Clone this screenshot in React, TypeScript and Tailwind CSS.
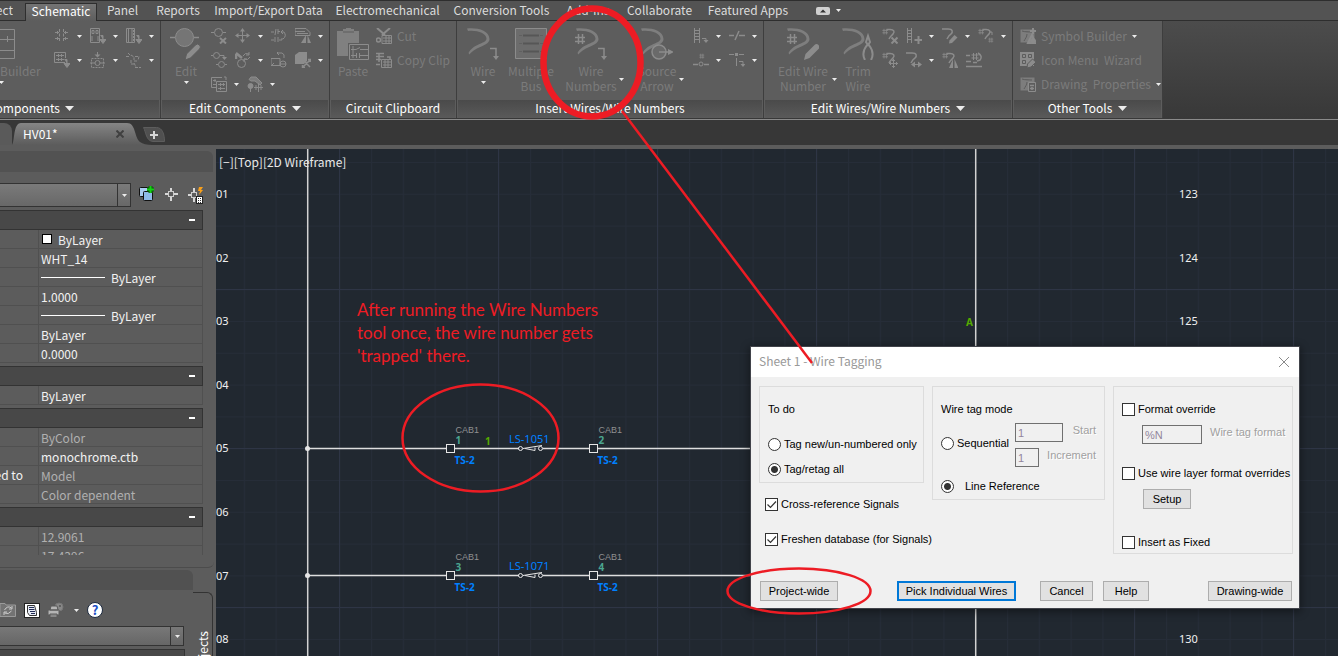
import React from "react";

type IconProps = { children: React.ReactNode; size?: number };

// 16px grid for small icons, 32px for the large ribbon buttons
const Icon = ({ children, size = 16 }: IconProps) => (
  <svg
    width={size}
    height={size}
    viewBox={`0 0 ${size} ${size}`}
    fill="none"
    stroke="currentColor"
    strokeWidth="1"
    className="shrink-0 text-[#8c8c8c]"
    aria-hidden="true"
  >
    {children}
  </svg>
);

const Caret = ({ big = false }: { big?: boolean }) => (
  <svg
    width={big ? 9 : 5}
    height={big ? 5 : 3}
    viewBox="0 0 8 4"
    preserveAspectRatio="none"
    className="shrink-0 fill-[#ececec]"
    aria-hidden="true"
  >
    <path d="M0 0h8L4 4z" />
  </svg>
);

const arrowDown = <path d="M10.5 7.5h2.5v4M10 11.5h6l-3 4z" fill="currentColor" />;
const hash = <path d="M2.5 1v7M5.5 1v7M.5 3h7M.5 6h7" />;
const smallWire = <path d="M5 1.5h3c4 0 5 2 3 4.5-1 1.5-3 2.500-4 5" strokeWidth="1.500" />;
const wire = (
  <path
    d="M0 0.500C10-.5 22 2 22.500 11 22.500 18 9 18 2.500 26.500L1.500 25C7 15 19.500 16 19.500 10.500 19 5 10 2 1 3z"
    fill="#7e7e7e"
    stroke="none"
  />
);
const bigHash = <path d="M3.500 6v10M7.500 6v10M0 9.500h10M0 13.500h10" strokeWidth="1.500" />;
const pencil = (
  <path d="M17 32l1.500-6 9-9q2-2 4 0t0 4l-9 9z" fill="currentColor" stroke="none" />
);
const smallPencil = <path d="M7 15.500l.5-3 5-5.500 3 2.500-5.500 5.500z" fill="currentColor" stroke="none" />;
const symbolPage = (
  <path d="M0 1h15v14H0z M2 3c3 1 7 1 10 1 M7 6c0 3-2 5-3 7" fill="currentColor" fillOpacity=".7" stroke="#5d5d5d" />
);

const icons = {
  component: (
    <>
      <path d="M5.500 1v13M9.500 1v13" strokeDasharray="3 1.500" />
      <path d="M1 4.500h4M10 4.500h4M1 10.500h4M10 10.500h4M3.500 3v3M11.500 3v3M3.500 9v3M11.500 9v3" />
    </>
  ),
  cabinet: (
    <>
      <path d="M.5.500h9v14h-9zM2 2.500h2v3H2zM6 2.500h2v3H6zM2 8v5M8 8v5" />
      {arrowDown}
    </>
  ),
  terminals: (
    <>
      <path d="M.500.500h8v14h-8zM2.500.500v14M6 1v13" />
      <path d="M7.500 2v11" strokeDasharray="2 1" />
      {arrowDown}
    </>
  ),
  plc: (
    <>
      <path d="M11 10.500H.500V.500h11V6M2 3.500h8M2 7.500h8M4.500 2v3M7.500 2v3M4.500 6v3M7.500 6v3" />
      {arrowDown}
    </>
  ),
  snap: (
    <>
      <path d="M1.500 6.500h12v9h-12z" strokeDasharray="2 1" />
      <circle cx="7.500" cy="11" r="2.500" />
      <path d="M0 11h5M10 11h5M7.500 0v3" />
      <path d="M4.500 2.500h6l-3 3z" fill="currentColor" stroke="none" />
    </>
  ),
  circuit: (
    <path d="M0 4.500h4M5 3l3 2v3M9 4.500h4l-1 4M2 1l3 3M5 8v4h3M8 9h4M9 15.500h6M8 11l2 4" strokeDasharray="3 1" />
  ),
  erase: (
    <>
      <circle cx="7.500" cy="4.500" r="4" />
      <path d="M0 4.500h3M12 4.500h3" />
      <path d="M9 10l6 5.500M15 10l-6 5.500" strokeWidth="2" />
    </>
  ),
  move: (
    <>
      <path d="M7.500 2v11M2 7.500h11" />
      <path d="M5 3.500L7.500 0 10 3.500zM5 11.500L7.500 15l2.500-3.500zM3.500 5L0 7.500 3.500 10zM11.500 5L15 7.500 11.500 10z" fill="currentColor" stroke="none" />
    </>
  ),
  align: (
    <path d="M0 4h3M5 1l-1 6M7 1v5M7 3.500h2M0 12h3M4 9v5M7 9v5M8 12h3M10 4h3q3 4-1 7h-2M12 2l-2 2 2 2" />
  ),
  surfer: (
    <>
      <path d="M0 .500h11l4 4v3H0zM0 3.500h10M2 5.500h11" />
      <path d="M11 7v8H6zM12.500 7v8H16z" fill="currentColor" stroke="none" />
    </>
  ),
  copyPart: (
    <>
      <circle cx="5.500" cy="3.500" r="3" />
      <circle cx="10.500" cy="12.500" r="3" />
      <path d="M0 3.500h2M9 3.500h4v3M5 12.500h2M14 12.500h2" />
      <path d="M11 5h5l-2.500 3z" fill="currentColor" stroke="none" />
    </>
  ),
  swap: (
    <>
      <circle cx="6.500" cy="11.500" r="4" />
      <path d="M1 2v5M1 1l6 5" strokeWidth="2.500" />
      <path d="M8 4q2-4 6-2M14 0v3h-3M15 5q-2 4-6 2M9 10V7h3" />
    </>
  ),
  retag: (
    <>
      <path d="M0 6.500h9v7H0zM7 1h4q3 1 2 5M8 3l-2-2 2-2M0 14l3-3" />
      <circle cx="12" cy="12" r="3" />
      <path d="M9 12h6" />
    </>
  ),
  block: (
    <>
      <path d="M0 3l4-3h8v9l-3 3H0z" fill="currentColor" stroke="none" />
      <path d="M8 8l7 7M15 8l-7 7M13 7.500h2.500V10M7.500 13v2.500H10" strokeWidth="1.500" />
    </>
  ),
  copyCircuit: (
    <>
      <path d="M6 11.500H.500V1.500H11M2 4.500h3M2 8.500h3M4 3v3M13 1h2v3" />
      <path d="M5.500 5.500h10v10h-10zM7 8.500h7M7 12.500h7M9.500 7v3M12.500 7v3M9.500 11v3" />
    </>
  ),
  moveGroup: (
    <>
      <path d="M2 3.500L4 1h5l6 6-2 2-5-4H4z" fill="#7c7c7c" />
      <circle cx="3.500" cy="10" r="2.500" fill="currentColor" />
      <path d="M11.500 7v9M7 11.500h9M9 9v5M14 9v5M3.500 12v4" />
    </>
  ),
  cut: (
    <>
      <path d="M1 0l8 7M14 0L6 7" strokeWidth="2" />
      <circle cx="2.500" cy="12" r="2" strokeWidth="1.500" />
      <path d="M6 7.500h9.500v8H6zM7 10h8M7 13h8M10 8v7M13 8v7" />
    </>
  ),
  copyClip: (
    <>
      <path d="M0 1.500h8M0 4.500h8M0 7.500h5M3 2v8M11 5h3v3M0 12.500h4" strokeWidth="1.500" />
      <path d="M5.500 7.500h10v8h-10zM7 10h8M7 13h8M9 8v7M12 8v7" />
    </>
  ),
  ladder: (
    <>
      <path d="M1.500 0v15M6.500 0v15M1.500 2.500h5M1.500 5.500h5M1.500 8.500h5M1.500 11.500h5M9 10.500h4v3" />
      <path d="M10.500 12h5L13 15z" fill="currentColor" stroke="none" />
    </>
  ),
  ladderAdd: (
    <>
      <path d="M1.500 0v15M5.500 0v15M1.500 2.500h4M1.500 5.500h4M1.500 8.500h4M1.500 11.500h4" />
      <path d="M12.500 8v8M8.500 12h8" strokeWidth="2" />
    </>
  ),
  gap: <path d="M0 7.500h5M10 7.500h6M6 12l4-9" strokeWidth="1.500" />,
  wireDot: (
    <>
      <g transform="translate(6 1) scale(.7)">{hash}</g>
      <circle cx="8" cy="12" r="2" />
      <path d="M0 12.500h5M11 12.500h5" strokeWidth="1.500" />
    </>
  ),
  tee: (
    <>
      <path d="M0 2.500h5M10 2.500h5M7.500 6v8M10 9.500h4v3" />
      <path d="M6 1h3v3H6zM11.500 12h5L14 15z" fill="currentColor" stroke="none" />
    </>
  ),
  wireDelete: (
    <>
      {smallWire}
      <g transform="scale(.8)">{hash}</g>
      <path d="M9.500 9.500l6 6M15.500 9.500l-6 6" strokeWidth="2" />
    </>
  ),
  wirePencil: (
    <>
      <path d="M0 1h6c5 0 5 3 3 5-2 1-3 3-4 5" strokeWidth="1.500" />
      {smallPencil}
    </>
  ),
  wireCopy: (
    <>
      {smallWire}
      <g transform="scale(.8)">{hash}</g>
      <g transform="translate(10 9) scale(.7)">{hash}</g>
      <path d="M12 4h2v3" />
    </>
  ),
  wireMove: (
    <>
      {smallWire}
      <g transform="scale(.8)">{hash}</g>
      <path d="M11.500 7v9M7 11.500h9M10 8.500h3M10 14.500h3M8.500 10v3M14.500 10v3" />
    </>
  ),
  wireStretch: (
    <>
      <path d="M0 1h6c5 0 5 3 3 5-2 1-3 3-4 5" strokeWidth="1.500" />
      <path d="M5 12.500l4-3v6zM16 12.500l-4-3v6z" fill="currentColor" stroke="none" />
      <path d="M8 12.500h5" />
    </>
  ),
  wireFlip: (
    <>
      {smallWire}
      <g transform="scale(.8)">{hash}</g>
      <path d="M11 7v9H7zM12.500 7v9h4z" fill="currentColor" stroke="none" />
    </>
  ),
  wireToggle: (
    <>
      <g transform="translate(5 0)">{hash}</g>
      <path d="M0 3.500h4M0 9.500h5M7 10.500h4M12 1q5 3 2 7l-3 1M0 14.500h16" strokeWidth="1.500" />
    </>
  ),
  symbolBuilder: (
    <>
      {symbolPage}
      <path d="M8 15l4-8 3 8zM13 0v6M10 3h6" strokeWidth="2" />
      <circle cx="13" cy="13" r="2.500" fill="#8c8c8c" />
    </>
  ),
  iconMenu: (
    <>
      <path d="M0 0h14v14H0z" fill="currentColor" stroke="none" />
      <path d="M2.500 2.500h3v3h-3zM8.500 2.500h3v3h-3zM2.500 8.500h3v3h-3z" stroke="#5d5d5d" />
      <path d="M7 16l.5-4 5-5 3.500 3-5 5z" fill="currentColor" stroke="#5d5d5d" />
    </>
  ),
  drawingProps: (
    <>
      {symbolPage}
      <path d="M8.500 6.500h7v9h-7z" fill="#5d5d5d" />
      <path d="M10 9.500h4M10 12.500h4M12 11v3" strokeWidth="1.500" />
    </>
  ),
};

type IconName = keyof typeof icons;
type Tool = { icon: IconName; menu?: boolean };

const ToolGrid = ({ rows }: { rows: Tool[][] }) => (
  <div className="flex flex-col gap-2">
    {rows.map((row, i) => (
      <div key={i} className="flex">
        {row.map((tool) => (
          <button
            key={tool.icon}
            type="button"
            aria-label={tool.icon}
            className={`flex h-4 items-center gap-[7px] ${tool.menu ? "w-9" : "w-6"}`}
          >
            <Icon>{icons[tool.icon]}</Icon>
            {tool.menu && <Caret />}
          </button>
        ))}
      </div>
    ))}
  </div>
);

type BigToolProps = {
  lines: string[];
  width: string;
  caret?: "below" | "side";
  children: React.ReactNode;
};

const BigTool = ({ lines, width, caret, children }: BigToolProps) => (
  <div className="flex">
    <button type="button" className={`flex shrink-0 flex-col items-center ${width}`}>
      <Icon size={32}>{children}</Icon>
      <span className="mt-[3px] flex flex-col items-center leading-[15px] whitespace-nowrap text-[#7b7b7b]">
        {lines.map((line) => (
          <span key={line}>{line}</span>
        ))}
      </span>
      {caret === "below" && (
        <span className="mt-[3px]">
          <Caret />
        </span>
      )}
    </button>
    {caret === "side" && (
      <span className="flex w-2 justify-center pt-[50px]">
        <Caret />
      </span>
    )}
  </div>
);

type PanelProps = {
  title: string;
  width: string;
  menu?: boolean;
  children: React.ReactNode;
};

const Panel = ({ title, width, menu, children }: PanelProps) => (
  <section
    className={`flex shrink-0 flex-col border-r border-[#3e3e3e] bg-[#5d5d5d] ${width}`}
  >
    <div className="flex flex-1 overflow-hidden pt-[7px]">{children}</div>
    <h2 className="mx-px flex h-[18px] items-center justify-center gap-1.5 overflow-hidden bg-linear-to-b from-[#4a4a4a] to-[#5a5a5a] pb-0.5 whitespace-nowrap text-white">
      {title}
      {menu && <Caret big />}
    </h2>
  </section>
);

const tabs = [
  { label: "Panel", width: "w-[51px]" },
  { label: "Reports", width: "w-[60px]" },
  { label: "Import/Export Data", width: "w-[121px]" },
  { label: "Electromechanical", width: "w-[117px]" },
  { label: "Conversion Tools", width: "w-[111px]" },
  { label: "Add-Ins", width: "w-[62px]" },
  { label: "Collaborate", width: "w-[81px]" },
  { label: "Featured Apps", width: "w-[96px]" },
];

const RibbonTabs = () => (
  <nav className="flex h-[21px] shrink-0 border-t border-b border-[#2e2e2e] bg-[#535353] text-[#dcdcdc]">
    <button type="button" className="flex w-[13px] items-center justify-end overflow-hidden pb-0.5">
      Project
    </button>
    <button
      type="button"
      className="mt-0.5 -mb-px ml-3 w-[72px] border border-b-0 border-[#2e2e2e] bg-linear-to-b from-[#747474] to-[#5d5d5d] pb-1 leading-[13px] text-white"
    >
      Schematic
    </button>
    {tabs.map((tab) => (
      <button key={tab.label} type="button" className={`pb-0.5 whitespace-nowrap ${tab.width}`}>
        {tab.label}
      </button>
    ))}
    <button type="button" aria-label="Minimize" className="ml-5 flex items-center gap-1.5">
      <svg width="14" height="8" viewBox="0 0 14 8" aria-hidden="true">
        <rect width="14" height="8" rx="2" fill="#d0d0d0" />
        <path d="M4 5.500h6L7 2.500z" fill="#333" />
      </svg>
      <Caret />
    </button>
  </nav>
);

const otherTools: { icon: IconName; label: string; menu?: boolean }[] = [
  { icon: "symbolBuilder", label: "Symbol Builder", menu: true },
  { icon: "iconMenu", label: "Icon Menu  Wizard" },
  { icon: "drawingProps", label: "Drawing  Properties", menu: true },
];

const Ribbon = () => (
  <div className="flex h-[99px] shrink-0 border-b border-[#8a8a8a] bg-linear-to-b from-[#4c4c4c] to-[#383838] pb-px">
    {/* first panel is scrolled under the left edge */}
    <section className="flex w-[161px] shrink-0 flex-col border-r border-[#3e3e3e] bg-[#5d5d5d]">
      <div className="flex flex-1 overflow-hidden pt-[7px]">
        <div className="flex w-[54px] shrink-0 flex-col">
          <Icon size={32}>
            <path d="M0 1.500h14.500v29H0M0 22.500h14M0 11.500h14M7.500 8v6" />
          </Icon>
          <span className="mt-[3px] w-[39px] text-right leading-[15px] text-[#7b7b7b]">Builder</span>
          <span className="-ml-px mt-[3px]">
            <Caret />
          </span>
        </div>
        <ToolGrid
          rows={[
            [{ icon: "component", menu: true }, { icon: "cabinet", menu: true }, { icon: "terminals", menu: true }],
            [{ icon: "plc", menu: true }, { icon: "snap", menu: true }, { icon: "circuit", menu: true }],
          ]}
        />
      </div>
      <h2 className="mr-px flex h-[18px] items-center bg-linear-to-b from-[#4a4a4a] to-[#5a5a5a] pb-0.5 text-white">
        <span className="mr-[5px] flex w-[60px] justify-end overflow-hidden">Components</span>
        <Caret big />
      </h2>
    </section>

    <Panel title="Edit Components" width="w-[169px]" menu>
      <BigTool lines={["Edit"]} width="w-[50px]" caret="below">
        <circle cx="14.500" cy="9.500" r="9" fill="#757575" />
        <path d="M0 9.500h5M24 9.500h5" strokeWidth="1.500" />
        <path d="M15 32l1.500-6 9-9q2-2 4 0t0 4l-9 9z" fill="currentColor" stroke="#5d5d5d" />
      </BigTool>
      <ToolGrid
        rows={[
          [{ icon: "erase" }, { icon: "move", menu: true }, { icon: "align" }, { icon: "surfer", menu: true }],
          [{ icon: "copyPart" }, { icon: "swap", menu: true }, { icon: "retag" }, { icon: "block", menu: true }],
          [{ icon: "copyCircuit", menu: true }, { icon: "moveGroup", menu: true }],
        ]}
      />
    </Panel>

    <Panel title="Circuit Clipboard" width="w-[127px]">
      <BigTool lines={["Paste"]} width="w-[46px]">
        <path d="M0 3h6V1h3V0h5v1h3v2h5v12H11v13H0z" fill="#808080" stroke="none" />
        <path d="M6 4h11" stroke="#5d5d5d" />
        <path d="M12.500 16.500h19v15h-19zM14 21.500h5l4-2M23 21.500h8M14 27.500h5M22 27.500h9M19.500 25v5M22.500 25v5M16 18v12" />
      </BigTool>
      <div className="flex flex-col gap-2 text-[#7b7b7b]">
        <button type="button" className="flex h-4 items-center gap-[5px]">
          <Icon>{icons.cut}</Icon>Cut
        </button>
        <button type="button" className="flex h-4 items-center gap-[5px] whitespace-nowrap">
          <Icon>{icons.copyClip}</Icon>Copy Clip
        </button>
      </div>
    </Panel>

    <Panel title="Insert Wires/Wire Numbers" width="w-[307px]">
      <div className="flex pl-1">
        <BigTool lines={["Wire"]} width="w-[44px]" caret="below">
          {wire}
          <path d="M23 20.500h6v8" strokeWidth="1.500" />
          <path d="M26 28h6l-3 4z" fill="currentColor" stroke="none" />
        </BigTool>
        <BigTool lines={["Multiple", "Bus"]} width="w-[52px]">
          <path d="M.500.500h31v30H.500z" fill="#6c6c6c" />
          <path d="M8 7.500h16M8 15.500h16M8 23.500h16" stroke="#565656" strokeWidth="2" />
          <path d="M4 7.500h3M25 7.500h3M4 15.500h3M25 15.500h3M4 23.500h3M25 23.500h3" stroke="#606060" />
        </BigTool>
        <div className="flex gap-3 pl-2">
          <BigTool lines={["Wire", "Numbers"]} width="w-[52px]" caret="side">
            <g transform="translate(1 0)">{wire}</g>
            {bigHash}
            <path d="M23 20.500h6v8" strokeWidth="1.500" />
            <path d="M26 28h6l-3 4z" fill="currentColor" stroke="none" />
          </BigTool>
          <BigTool lines={["Source", "Arrow"]} width="w-10" caret="side">
            {wire}
            <circle cx="18" cy="24" r="7" fill="#6a6a6a" strokeWidth="1.500" />
            <path d="M18 24h9" strokeWidth="1.500" />
            <path d="M27 21l6 3-6 3z" fill="currentColor" stroke="none" />
          </BigTool>
        </div>
      </div>
      <div className="pl-2">
        <ToolGrid
          rows={[
            [{ icon: "ladder", menu: true }, { icon: "gap", menu: true }],
            [{ icon: "wireDot", menu: true }, { icon: "tee", menu: true }],
          ]}
        />
      </div>
    </Panel>

    <Panel title="Edit Wires/Wire Numbers" width="w-[249px]" menu>
      <div className="flex gap-1 pl-3">
        <BigTool lines={["Edit Wire", "Number"]} width="w-[54px]" caret="side">
          {wire}
          {bigHash}
          {pencil}
        </BigTool>
        <BigTool lines={["Trim", "Wire"]} width="w-[32px]">
          {wire}
          <path d="M24 14l2-6 2 6-2 3zM25 17q-6 8-2 15M27 17q6 8 2 15" strokeWidth="2" />
        </BigTool>
      </div>
      <div className="pl-2">
        <ToolGrid
          rows={[
            [{ icon: "wireDelete" }, { icon: "ladderAdd", menu: true }, { icon: "wirePencil", menu: true }, { icon: "wireCopy", menu: true }],
            [{ icon: "wireMove" }, { icon: "wireStretch", menu: true }, { icon: "wireFlip" }, { icon: "wireToggle" }],
          ]}
        />
      </div>
    </Panel>

    <Panel title="Other Tools" width="w-[150px]" menu>
      <div className="flex flex-col gap-2 pl-[7px] text-[#7b7b7b]">
        {otherTools.map((tool) => (
          <button key={tool.label} type="button" className="flex h-4 items-center gap-[5px] whitespace-pre">
            <Icon>{icons[tool.icon]}</Icon>
            {tool.label}
            {tool.menu && <Caret />}
          </button>
        ))}
      </div>
    </Panel>
  </div>
);

const FileTabs = () => (
  <div className="flex h-[29px] shrink-0 items-end border-b-4 border-[#5c5c5c] bg-[#373737]">
    <div className="h-[22px] w-3 rounded-tr-lg bg-[#5a5a5a]" />
    <div className="relative flex h-[22px] w-[132px] items-center justify-between pr-5 pl-[11px] text-white">
      <svg className="absolute inset-0" width="145" height="22" viewBox="0 0 145 22" aria-hidden="true">
        <defs>
          <linearGradient id="tabFill" x1="0" y1="0" x2="0" y2="1">
            <stop offset="0" stopColor="#858585" />
            <stop offset="1" stopColor="#5c5c5c" />
          </linearGradient>
        </defs>
        <path d="M0 22C3 18 1 0 9 0h106c9 0 7 14 13 19q4 3 12 3z" fill="url(#tabFill)" />
      </svg>
      <button type="button" className="relative">
        HV01*
      </button>
      <button type="button" aria-label="Close" className="relative">
        <svg width="8" height="8" viewBox="0 0 8 8" stroke="#404040" strokeWidth="2" aria-hidden="true">
          <path d="M.500.500l7 7M7.500.500l-7 7" />
        </svg>
      </button>
    </div>
    <button type="button" aria-label="New" className="relative -ml-px self-end pb-[3px]">
      <svg width="23" height="15" viewBox="0 0 23 15" aria-hidden="true">
        <path d="M.500.500h13c6 0 8 7 8 14H10C3 14 3 5 .500.500z" fill="#505050" stroke="#5d5d5d" />
        <path d="M11 4v8M7 8h8" stroke="#d5d5d5" strokeWidth="2" />
      </svg>
    </button>
  </div>
);

type Row = { label?: string; value: string; sample?: "swatch" | "line"; muted?: boolean };

const sections: Row[][] = [
  [
    { value: "ByLayer", sample: "swatch" },
    { value: "WHT_14" },
    { value: "ByLayer", sample: "line" },
    { value: "1.0000" },
    { value: "ByLayer", sample: "line" },
    { value: "ByLayer" },
    { value: "0.0000" },
  ],
  [{ value: "ByLayer" }],
  [
    { value: "ByColor", muted: true },
    { value: "monochrome.ctb" },
    { label: "ed to", value: "Model", muted: true },
    { value: "Color dependent", muted: true },
  ],
  [
    { value: "12.9061", muted: true },
    { value: "17.4396", muted: true },
  ],
];

const PropertySection = ({ rows }: { rows: Row[] }) => (
  <div className="mb-[3px] w-[203px]">
    <div className="flex h-5 items-center justify-end border border-l-0 border-[#333] bg-[#484848] pr-[7px]">
      <span className="h-0.5 w-1.5 bg-white" />
    </div>
    <table className="w-full table-fixed border-separate border-spacing-0 text-[#f2f2f2]">
      <tbody>
        {rows.map((row, i) => (
          <tr key={i}>
            <th className="h-[19px] w-[39px] border-r border-b border-[#505050] p-0 font-normal leading-[18px] whitespace-nowrap">
              <span className="flex w-[23px] justify-end overflow-hidden">{row.label}</span>
            </th>
            <td
              className={`h-[19px] border-r border-b border-[#505050] p-0 pl-0.5 leading-[17px] ${row.muted ? "text-[#b0b0b0]" : ""}`}
            >
              <span className="flex items-center">
                {row.sample === "swatch" && (
                  <span className="mr-1.5 ml-px size-2.5 border border-black bg-white" />
                )}
                {row.sample === "line" && <span className="mr-1.5 h-px w-16 bg-white" />}
                {row.value}
              </span>
            </td>
          </tr>
        ))}
      </tbody>
    </table>
  </div>
);

const DropArrow = () => (
  <span className="pointer-events-none absolute inset-y-0 right-0 flex w-[14px] items-center justify-center border-l border-[#333]">
    <Caret />
  </span>
);

const Palettes = () => (
  <aside className="flex w-[216px] shrink-0 flex-col overflow-hidden bg-[#5c5c5c]">
    <div className="mt-0.5 h-[21px] w-[213px] shrink-0 rounded-tr-md bg-[#525252]" />
    <div className="mt-[11px] flex h-6 shrink-0 items-center">
      <div className="relative h-6 w-[131px]">
        <select
          aria-label="Selection"
          className="size-full appearance-none border border-l-0 border-[#333] bg-linear-to-b from-[#7a7a7a] to-[#686868]"
        />
        <DropArrow />
      </div>
      <div className="ml-2 flex gap-2">
        <svg width="16" height="16" viewBox="0 0 16 16" aria-hidden="true">
          <rect x=".5" y="1.500" width="9" height="9" rx="1" fill="#a9cdf0" stroke="#111" />
          <rect x="4.500" y="5.500" width="9" height="9" rx="1" fill="#8fbbe8" stroke="#111" />
          <path d="M11.500 0v7M8 3.500h7" stroke="#0b5a0b" strokeWidth="4" />
          <path d="M11.500 0v7M8 3.500h7" stroke="#16d016" strokeWidth="2" />
        </svg>
        <svg width="16" height="16" viewBox="0 0 16 16" fill="none" stroke="#fff" aria-hidden="true">
          <rect x="5.500" y="5.500" width="5" height="5" stroke="#ccc" />
          <path d="M8 2v3M8 11v4M2 8h3M11 8h4" strokeWidth="1.500" />
        </svg>
        <svg width="18" height="18" viewBox="0 0 18 18" fill="none" stroke="#fff" aria-hidden="true">
          <rect x="4.500" y="6.500" width="5" height="5" stroke="#ccc" />
          <path d="M7 2v4M7 12v4M1 9h3" strokeWidth="1.500" />
          <path d="M12 1h4l-2 3h2l-4 5 1-4h-2z" fill="#f9a01b" stroke="none" />
          <rect x="9.500" y="10.500" width="6" height="7" fill="#fff" stroke="#222" />
          <path d="M11 12.500h4M11 14.500h4M11 16.500h4" stroke="#333" strokeDasharray="1 1" />
        </svg>
      </div>
    </div>
    <div className="mt-[3px] h-[345px] shrink-0 overflow-hidden">
      {sections.map((rows, i) => (
        <PropertySection key={i} rows={rows} />
      ))}
    </div>
    <div className="h-[13px] w-[214px] shrink-0 rounded-br-md border-b border-[#4c4c4c]" />
    <div className="mt-[2px] flex flex-1">
      <div className="w-[193px] shrink-0">
        <div className="h-5 rounded-tr-md bg-[#515151]" />
        <div className="mt-3 flex h-4 items-center">
          <svg width="16" height="14" viewBox="0 0 16 14" fill="none" stroke="#9a9a9a" aria-hidden="true">
            <path d="M0 .500h5l1 1.500h9.500v11.500H0z" fill="#737373" />
            <path d="M4.500 7q3-5 7-2M12 3v3H9M11.500 8q-3 4-7 2M4 12V9h3" stroke="#ccc" />
          </svg>
          <svg className="ml-2" width="16" height="15" viewBox="0 0 16 15" aria-hidden="true">
            <rect x=".5" y=".5" width="15" height="14" fill="#fff" stroke="#222" />
            <path d="M3.500 2.500h7l2 7v3h-7l-2-3z" fill="#e8edf6" stroke="#333" />
            <path d="M5 4.500h5M5 6.500h5.500M6 8.500h5M7 10.500h4" stroke="#222b55" />
          </svg>
          <svg className="ml-2" width="16" height="16" viewBox="0 0 16 16" aria-hidden="true">
            <circle cx="11" cy="5" r="4" fill="#888" stroke="#777" />
            <circle cx="12" cy="4" r="1" fill="#555" />
            <path d="M3 4h6l1 4H2zM0 8h11v5H0zM2 12h7v3H2z" fill="#b5b5b5" stroke="#5a5a5a" />
          </svg>
          <span className="ml-2.5">
            <Caret />
          </span>
          <svg className="ml-2" width="16" height="16" viewBox="0 0 16 16" aria-hidden="true">
            <circle cx="8" cy="8" r="7.500" fill="#fff" stroke="#1c2a40" />
            <text x="8" y="12.500" textAnchor="middle" className="fill-[#1b4fc4] text-[13px] font-bold">
              ?
            </text>
          </svg>
        </div>
        <div className="relative mt-2 h-5 w-[184px]">
          <select
            aria-label="List"
            className="size-full appearance-none border border-l-0 border-[#333] bg-linear-to-b from-[#787878] to-[#666]"
          />
          <DropArrow />
        </div>
        <div className="mt-[3px] h-5 w-[185px] border border-l-0 border-[#333] bg-[#484848]" />
      </div>
      <div className="mt-[22px] flex w-5 justify-center rounded-tr-md border-t border-r border-[#333] pt-10">
        <span className="h-6 rotate-180 leading-4 text-white [writing-mode:vertical-rl]">jects</span>
      </div>
    </div>
  </aside>
);

const rungs = ["01", "02", "03", "04", "05", "06", "07", "08"];
const rightRungs = [
  { label: "123", y: 45 },
  { label: "124", y: 109 },
  { label: "125", y: 172 },
  { label: "130", y: 490 },
];
const wires = [
  { y: 299.5, tag: "LS-1051", from: "1", to: "2" },
  { y: 426.5, tag: "LS-1071", from: "3", to: "4" },
];

const Terminal = ({ x, y, num }: { x: number; y: number; num: string }) => (
  <g>
    <rect x={x - 4} y={y - 4} width="8" height="8" fill="#212830" stroke="#e6e6e6" />
    <text x={x + 5} y={y - 16} fill="#909090" className="font-['Liberation_Sans'] text-[9px]">CAB1</text>
    <text x={x + 5} y={y - 5} fill="#4ba690" className="text-[10px] font-bold">{num}</text>
    <text x={x + 4} y={y + 15} fill="#0080ff" className="text-[10px] font-bold">TS-2</text>
  </g>
);

// Ladder drawing: two rails, two rungs, background grid every 159px split in five
const Drawing = () => (
  <svg className="absolute inset-0 size-full font-['Noto_Sans'] text-[11px]">
    <defs>
      <pattern id="minor" x="27.800" y="13" width="31.800" height="31.800" patternUnits="userSpaceOnUse">
        <path d="M.500 0v31.800M0 .500h31.800" stroke="#262d38" />
      </pattern>
      <pattern id="major" x="123" y="140" width="159" height="159" patternUnits="userSpaceOnUse">
        <path d="M.500 0v159M0 .500h159" stroke="#2e3545" />
      </pattern>
    </defs>
    <rect width="100%" height="100%" fill="url(#minor)" />
    <rect width="100%" height="100%" fill="url(#major)" />
    <path d="M91.700 0V507M759.700 0V507" stroke="#d2d2d2" strokeWidth="1.500" />
    {rungs.map((label, i) => (
      <text key={label} x="0" y={Math.round(49 + i * 63.6)} fill="#f0f0f0">{label}</text>
    ))}
    {rightRungs.map((r) => (
      <text key={r.label} x="963" y={r.y + 4} fill="#f0f0f0">{r.label}</text>
    ))}
    {wires.map((w) => (
      <g key={w.tag}>
        <path d={`M91 ${w.y}H303M327 ${w.y}H760`} stroke="#dedede" strokeWidth="1.500" />
        <circle cx="91.500" cy={w.y} r="2.500" fill="#e6e6e6" />
        <Terminal x={234.5} y={w.y} num={w.from} />
        <Terminal x={377.5} y={w.y} num={w.to} />
        <g fill="none" stroke="#e6e6e6">
          <circle cx="304.500" cy={w.y} r="2" />
          <circle cx="324.500" cy={w.y} r="2" />
          <path d={`M307 ${w.y}L326 ${w.y - 3}M309 ${w.y}l10 2v-3`} />
        </g>
        <text x="293" y={w.y - 6} fill="#0080ff">{w.tag}</text>
      </g>
    ))}
    <text x="269" y="296" fill="#55aa00" className="text-[10px] font-bold">1</text>
    <text x="750" y="177" fill="#55aa00" className="text-[10px] font-bold">A</text>
  </svg>
);

type ChoiceProps = {
  label: string;
  type: "radio" | "checkbox";
  name?: string;
  checked?: boolean;
  wide?: boolean;
};

const Choice = ({ label, type, name, checked, wide }: ChoiceProps) => (
  <label className={`relative flex h-4 items-center whitespace-nowrap ${wide ? "gap-[11px]" : "gap-[3px]"}`}>
    <input
      type={type}
      name={name}
      defaultChecked={checked}
      className={`peer size-[13px] shrink-0 appearance-none border border-[#333] bg-white ${
        type === "radio"
          ? "rounded-full checked:bg-[radial-gradient(circle,#333_0_3px,#fff_4px)]"
          : ""
      }`}
    />
    {type === "checkbox" && (
      <svg
        className="absolute left-0 hidden peer-checked:block"
        width="13"
        height="13"
        viewBox="0 0 13 13"
        fill="none"
        stroke="#333"
        aria-hidden="true"
      >
        <path d="M2.500 6.500l3 3 5.500-6" strokeWidth="1.200" />
      </svg>
    )}
    {label}
  </label>
);

const fieldClass = "h-[19px] border border-[#707070] bg-[#f0f0f0] pl-0.5 text-[#91859c]";
const fieldLabelClass = "text-[#a0a0a0] [text-shadow:1px_1px_0_#fff]";
const groupClass = "border border-[#dcdcdc] px-2 pt-3.5";

const DialogButton = ({ label, className, primary }: { label: string; className: string; primary?: boolean }) => (
  <button
    type="button"
    className={`h-5 bg-[#e1e1e1] whitespace-nowrap ${primary ? "border-2 border-[#0078d7]" : "border border-[#adadad]"} ${className}`}
  >
    {label}
  </button>
);

const WireTaggingDialog = () => (
  <div
    role="dialog"
    aria-labelledby="dialog-title"
    className="absolute top-[198px] left-[535px] w-[548px] bg-[#f0f0f0] pb-[7px] font-['Liberation_Sans',sans-serif] text-[11px] text-black shadow-[0_0_0_1px_#41434a,0_2px_8px_2px_rgba(0,0,0,0.4)]"
  >
    <div className="flex h-[30px] items-center justify-between bg-white px-2">
      <h1 id="dialog-title" className="pb-0.5 font-['Noto_Sans_CJK_SC',sans-serif] text-xs text-[#999]">
        Sheet 1 - Wire Tagging
      </h1>
      <button type="button" aria-label="Close">
        <svg width="14" height="14" viewBox="0 0 14 14" stroke="#8a8a8a" aria-hidden="true">
          <path d="M2 2l10 10M12 2L2 12" />
        </svg>
      </button>
    </div>

    <div className="flex items-start gap-2 pt-[9px] pr-1.5 pl-2">
      <div className="w-[165px]">
        <div role="group" className={`${groupClass} h-[97px]`}>
          <p className="leading-4">To do</p>
          <div className="mt-[19px] flex flex-col gap-[9px]">
            <Choice type="radio" name="todo" label="Tag new/un-numbered only" />
            <Choice type="radio" name="todo" label="Tag/retag all" checked />
          </div>
        </div>
        <div className="mt-[13px] flex flex-col gap-[19px] pl-1.5">
          <Choice type="checkbox" label="Cross-reference Signals" checked />
          <Choice type="checkbox" label="Freshen database (for Signals)" checked />
        </div>
      </div>

      <div role="group" className={`${groupClass} h-[114px] w-[173px]`}>
        <p className="leading-4">Wire tag mode</p>
        <div className="mt-1.5 flex justify-between">
          <div className="pt-3">
            <Choice type="radio" name="mode" label="Sequential" />
          </div>
          <div className="flex w-[81px] flex-col gap-1.5">
            <div className="flex justify-between">
              <input id="start" defaultValue="1" className={`${fieldClass} w-12`} />
              <label htmlFor="start" className={fieldLabelClass}>Start</label>
            </div>
            <div className="flex justify-between">
              <input id="increment" defaultValue="1" className={`${fieldClass} w-6`} />
              <label htmlFor="increment" className={fieldLabelClass}>Increment</label>
            </div>
          </div>
        </div>
        <div className="mt-[11px]">
          <Choice type="radio" name="mode" label="Line Reference" checked wide />
        </div>
      </div>

      <div role="group" className={`${groupClass} h-[168px] w-[180px]`}>
        <Choice type="checkbox" label="Format override" />
        <div className="mt-2 flex gap-2 pl-5">
          <input id="format" defaultValue="%N" className={`${fieldClass} w-[60px]`} />
          <label htmlFor="format" className={`${fieldLabelClass} whitespace-nowrap`}>Wire tag format</label>
        </div>
        <div className="mt-[21px]">
          <Choice type="checkbox" label="Use wire layer format overrides" />
        </div>
        <DialogButton label="Setup" className="mt-2 ml-[21px] block w-12" />
        <div className="mt-[25px]">
          <Choice type="checkbox" label="Insert as Fixed" />
        </div>
      </div>
    </div>

    <div className="mt-[27px] flex pr-[7px] pl-[9px]">
      <DialogButton label="Project-wide" className="w-[78px]" />
      <DialogButton label="Pick Individual Wires" className="ml-[59px] w-[119px]" primary />
      <DialogButton label="Cancel" className="ml-6 w-[53px]" />
      <DialogButton label="Help" className="ml-2.5 w-[46px]" />
      <DialogButton label="Drawing-wide" className="ml-auto w-[84px]" />
    </div>
  </div>
);

const Markup = () => (
  <svg
    className="pointer-events-none absolute inset-0 size-full"
    fill="none"
    stroke="#ed1c24"
    strokeWidth="2.500"
    aria-hidden="true"
  >
    <ellipse cx="592" cy="62.500" rx="48.500" ry="54" strokeWidth="6.500" />
    <path d="M622 111L812 363" />
    <ellipse cx="480.500" cy="438" rx="78" ry="53.500" />
    <ellipse cx="799" cy="591" rx="71.500" ry="22.500" />
  </svg>
);

export default function App() {
  return (
    <div className="relative flex h-screen flex-col overflow-hidden bg-[#5c5c5c] font-['Noto_Sans_CJK_SC',sans-serif] text-xs">
      <RibbonTabs />
      <Ribbon />
      <FileTabs />
      <div className="flex min-h-0 flex-1">
        <Palettes />
        <main className="relative flex-1 overflow-hidden bg-[#212830]">
          <Drawing />
          <p className="absolute top-[5px] left-[3px] text-[#e8e8e8]">[−][Top][2D Wireframe]</p>
          <p className="absolute top-[149px] left-[141px] w-[270px] font-['Lato',sans-serif] text-[17px] leading-[23px] text-[#ed1c24]">
            After running the Wire Numbers tool once, the wire number gets 'trapped' there.
          </p>
          <WireTaggingDialog />
        </main>
      </div>
      <Markup />
    </div>
  );
}
